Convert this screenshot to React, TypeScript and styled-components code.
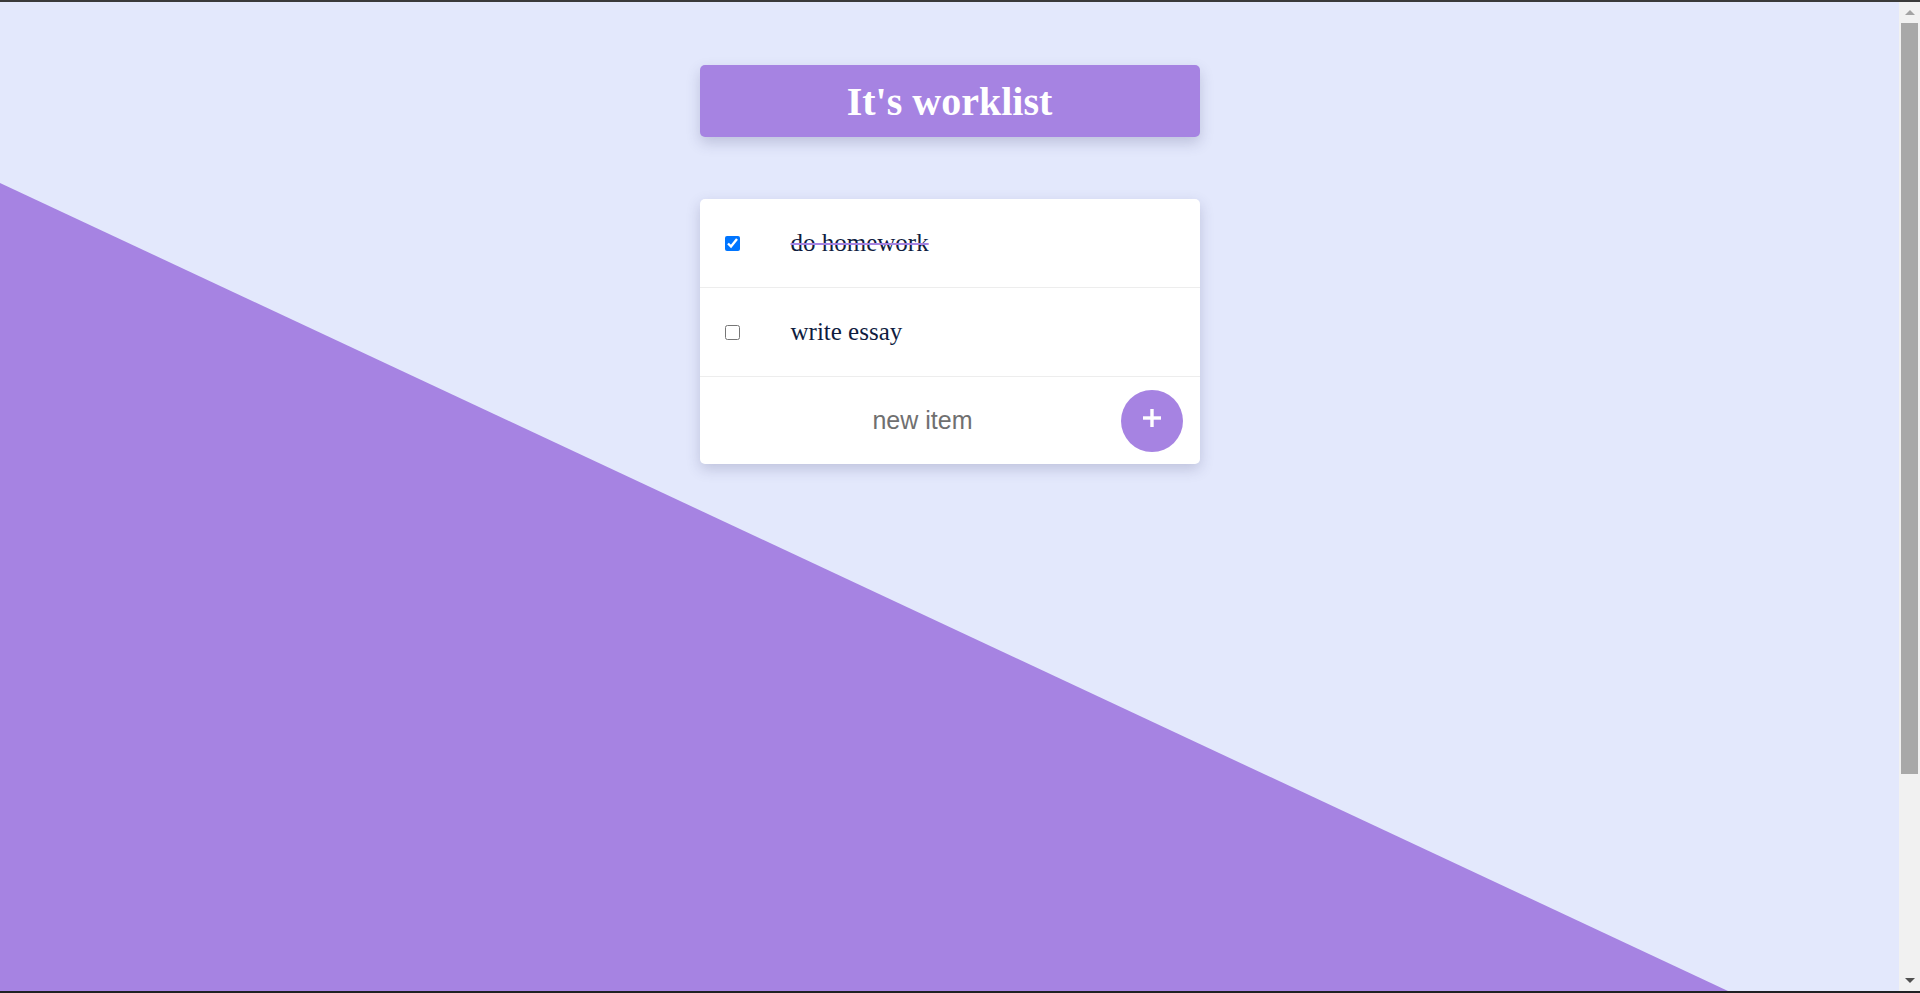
import React, { useState } from "react";
import styled, { createGlobalStyle } from "styled-components";

const GlobalStyle = createGlobalStyle`
html, body {
    margin: 0;
    padding: 0;
    height: 100%;
    overflow: hidden;
}
#root {
    height: 100%;
}
`;

const purple = "#a683e2";

const Frame = styled.div`
height: 100vh;
display: flex;
flex-direction: column;
background: #3a3a3a;
`;

const Edge = styled.div<{ $color: string }>`
height: 2px;
flex-shrink: 0;
background: ${(p) => p.$color};
`;

const Viewport = styled.div`
flex: 1;
display: flex;
min-height: 0;
`;

const Page = styled.main`
flex: 1;
position: relative;
overflow: hidden;
background: #e3e8fc;
font-family: "Liberation Serif", "Times New Roman", serif;

&::before {
    content: "";
    position: absolute;
    inset: 0;
    background: ${purple};
    clip-path: polygon(0 181px, 1728px 100%, 0 100%);
}
`;

const Content = styled.div`
position: relative;
width: 500px;
margin: 63px auto 0;
display: flex;
flex-direction: column;
gap: 62px;
`;

const Heading = styled.div`
height: 72px;
display: flex;
align-items: center;
justify-content: center;
background: ${purple};
border-radius: 5px;
box-shadow: 0 6px 14px rgba(60, 60, 110, 0.22);
h1 {
    margin: 0;
    color: #ffffff;
    font-size: 40px;
    font-weight: bold;
    line-height: 1;
    padding-top: 2px;
}
`;

const Card = styled.div`
background: #ffffff;
border-radius: 5px;
box-shadow: 0 5px 14px rgba(60, 60, 110, 0.22);
`;

const Row = styled.div`
height: 89px;
display: flex;
align-items: center;
padding: 0 25px;
box-sizing: border-box;
border-bottom: 1px solid #ededed;
input[type="checkbox"] {
    width: 15px;
    height: 15px;
    margin: 0;
    flex-shrink: 0;
}
`;

const ItemText = styled.p<{ $done: boolean }>`
margin: 0 0 0 51px;
font-size: 25px;
color: #0f1c3f;
text-decoration: ${(p) => (p.$done ? "line-through" : "none")};
text-decoration-color: ${purple};
text-decoration-thickness: 2px;
`;

const AddRow = styled.form`
height: 87px;
display: flex;
align-items: center;
padding: 0 17px 0 25px;
`;

const NewItem = styled.input`
flex: 1;
min-width: 0;
border: none;
outline: none;
background: transparent;
text-align: center;
font-family: "Liberation Sans", Arial, sans-serif;
font-size: 25px;
color: #333;
padding: 0;
margin: 0;
&::placeholder {
    color: #707070;
}
`;

const AddButton = styled.button`
width: 62px;
height: 62px;
flex-shrink: 0;
border: none;
border-radius: 50%;
background: ${purple};
display: flex;
align-items: center;
justify-content: center;
padding: 0 0 6px;
cursor: pointer;
`;

const Scrollbar = styled.div`
width: 21px;
flex-shrink: 0;
background: #f1f1f1;
display: flex;
flex-direction: column;
align-items: center;
`;

const Arrow = styled.div<{ $down?: boolean; $color: string }>`
height: 21px;
width: 21px;
display: flex;
align-items: center;
justify-content: center;
&::after {
    content: "";
    width: 0;
    height: 0;
    border-left: 5px solid transparent;
    border-right: 5px solid transparent;
    ${(p) =>
        p.$down
            ? `border-top: 5px solid ${p.$color};`
            : `border-bottom: 5px solid ${p.$color};`}
}
`;

const Thumb = styled.div`
width: 17px;
height: 751px;
background: #a8a8a8;
`;

const Track = styled.div`
flex: 1;
`;

interface Task {
    text: string;
    done: boolean;
}

export default function App() {
    const [tasks, setTasks] = useState<Task[]>([
        { text: "do homework", done: true },
        { text: "write essay", done: false },
    ]);
    const [draft, setDraft] = useState("");

    const toggle = (i: number) =>
        setTasks((all) => all.map((t, j) => (j === i ? { ...t, done: !t.done } : t)));

    const add = (e: React.FormEvent) => {
        e.preventDefault();
        if (!draft.trim()) return;
        setTasks((all) => [...all, { text: draft, done: false }]);
        setDraft("");
    };

    return (
        <>
            <GlobalStyle />
            <Frame>
                <Edge $color="#3a3a3a" />
                <Viewport>
                    <Page>
                        <Content>
                            <Heading>
                                <h1>It's worklist</h1>
                            </Heading>
                            <Card>
                                {tasks.map((t, i) => (
                                    <Row key={i}>
                                        <input type="checkbox" checked={t.done} onChange={() => toggle(i)} />
                                        <ItemText $done={t.done}>{t.text}</ItemText>
                                    </Row>
                                ))}
                                <AddRow onSubmit={add}>
                                    <NewItem
                                        placeholder="new item"
                                        value={draft}
                                        onChange={(e) => setDraft(e.target.value)}
                                    />
                                    <AddButton type="submit">
                                        <svg width="18" height="18" viewBox="0 0 18 18">
                                            <rect x="7.3" y="0" width="3.4" height="18" fill="#fff" />
                                            <rect x="0" y="7.3" width="18" height="3.4" fill="#fff" />
                                        </svg>
                                    </AddButton>
                                </AddRow>
                            </Card>
                        </Content>
                    </Page>
                    <Scrollbar>
                        <Arrow $color="#a3a3a3" />
                        <Thumb />
                        <Track />
                        <Arrow $down $color="#505050" />
                    </Scrollbar>
                </Viewport>
                <Edge $color="#202124" />
            </Frame>
        </>
    );
}
